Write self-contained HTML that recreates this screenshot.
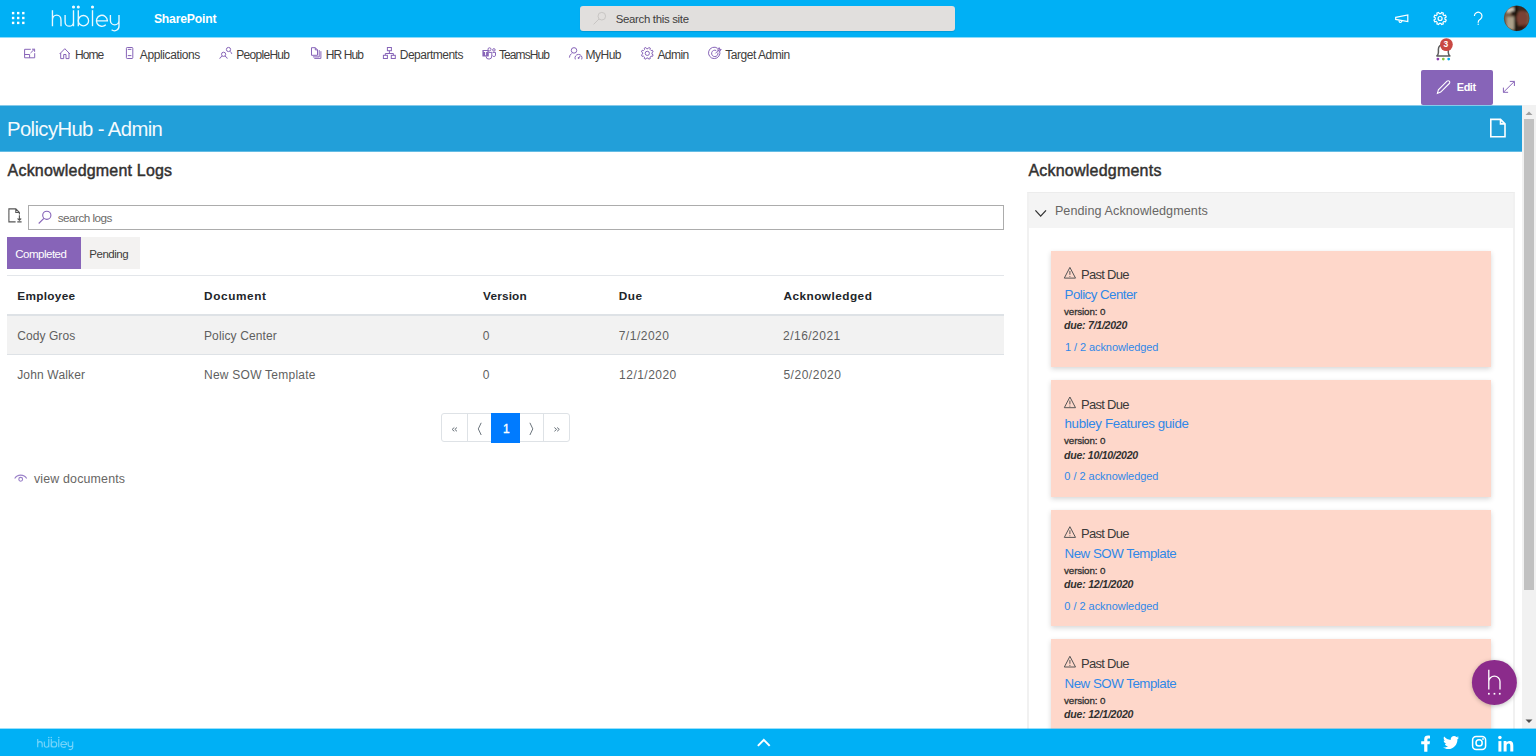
<!DOCTYPE html>
<html><head><meta charset="utf-8"><style>
html,body{margin:0;padding:0;width:1536px;height:756px;overflow:hidden;background:#fff}
.b{position:absolute;box-sizing:border-box}
.t{position:absolute;white-space:nowrap;line-height:20px;font-family:"Liberation Sans",sans-serif}
svg{position:absolute;left:0;top:0}
#foot{position:absolute;left:0;top:729px;width:1536px;height:27px;background:#00b0f5}
</style></head><body>
<div class="b" style="left:0px;top:0px;width:1536px;height:37px;background:#00b0f5"></div><div class="b" style="left:0px;top:37px;width:1536px;height:1px;background:rgba(0,176,245,0.45)"></div><div class="b" style="left:580px;top:6px;width:375px;height:25px;background:#e1dfdd;border-radius:3px;box-shadow:0 1px 1px rgba(0,0,0,0.12)"></div><div class="b" style="left:1421px;top:70px;width:72px;height:34.5px;background:#8764b8;border-radius:2px"></div><div class="b" style="left:0px;top:106px;width:1522px;height:45px;background:#229fd9"></div><div class="b" style="left:0px;top:105px;width:1522px;height:1px;background:rgba(34,159,217,0.55)"></div><div class="b" style="left:0px;top:151px;width:1522px;height:1px;background:rgba(34,159,217,0.7)"></div><div class="b" style="left:1522px;top:105px;width:14px;height:624px;background:#f1f1f1"></div><div class="b" style="left:1524px;top:119px;width:10px;height:471px;background:#c1c1c1"></div><div class="b" style="left:28px;top:205px;width:976px;height:25px;border:1px solid #acacac;background:#fff"></div><div class="b" style="left:7px;top:237px;width:74px;height:32px;background:#8764b8"></div><div class="b" style="left:81px;top:237px;width:59px;height:32px;background:#f3f2f1"></div><div class="b" style="left:7px;top:275px;width:997px;height:1px;background:#e3e6ea"></div><div class="b" style="left:7px;top:314px;width:997px;height:2px;background:#dee2e6"></div><div class="b" style="left:7px;top:316px;width:997px;height:38px;background:#f2f2f2"></div><div class="b" style="left:7px;top:354px;width:997px;height:1px;background:#dee2e6"></div><div class="b" style="left:441px;top:413px;width:129px;height:29px;border:1px solid #dee2e6;border-radius:3px;background:#fff"></div><div class="b" style="left:467px;top:414px;width:1px;height:28px;background:#dee2e6"></div><div class="b" style="left:491px;top:414px;width:1px;height:28px;background:#dee2e6"></div><div class="b" style="left:519px;top:414px;width:1px;height:28px;background:#dee2e6"></div><div class="b" style="left:543px;top:414px;width:1px;height:28px;background:#dee2e6"></div><div class="b" style="left:491px;top:413px;width:29px;height:30px;background:#007bff"></div><div class="b" style="left:1027px;top:192px;width:488px;height:540px;border:2px solid #f1f1f1;border-top:1px solid #ececec;background:#fff"></div><div class="b" style="left:1029px;top:193px;width:484px;height:35px;background:#f4f4f4"></div><div class="b" style="left:1051px;top:250.5px;width:440px;height:116.5px;background:#fed7ca;box-shadow:0 2px 5px rgba(0,0,0,0.16)"></div><div class="b" style="left:1051px;top:380.1px;width:440px;height:116.5px;background:#fed7ca;box-shadow:0 2px 5px rgba(0,0,0,0.16)"></div><div class="b" style="left:1051px;top:509.8px;width:440px;height:116.5px;background:#fed7ca;box-shadow:0 2px 5px rgba(0,0,0,0.16)"></div><div class="b" style="left:1051px;top:639.4px;width:440px;height:116.5px;background:#fed7ca;box-shadow:0 2px 5px rgba(0,0,0,0.16)"></div>
<svg width="1536" height="756" viewBox="0 0 1536 756"><rect x="11.9" y="11.9" width="2.4" height="2.4" fill="#fff"/><rect x="11.9" y="16.8" width="2.4" height="2.4" fill="#fff"/><rect x="11.9" y="21.7" width="2.4" height="2.4" fill="#fff"/><rect x="17.0" y="11.9" width="2.4" height="2.4" fill="#fff"/><rect x="17.0" y="16.8" width="2.4" height="2.4" fill="#fff"/><rect x="17.0" y="21.7" width="2.4" height="2.4" fill="#fff"/><rect x="22.1" y="11.9" width="2.4" height="2.4" fill="#fff"/><rect x="22.1" y="16.8" width="2.4" height="2.4" fill="#fff"/><rect x="22.1" y="21.7" width="2.4" height="2.4" fill="#fff"/><g fill="none" stroke="#fff" stroke-width="1.35" opacity="0.92"><path d="M52.45 10.2V26.2M52.45 20A4.27 4.9 0 0 1 61 20V26.2"/><path d="M65.1 15.1V21.9A4.2 4.3 0 0 0 73.5 21.9M73.5 10.2V26.2"/><path d="M78.3 10.2V26.2"/><circle cx="83.45" cy="20.65" r="5.15"/><path d="M92.5 10.2V26.2"/><path d="M96.4 20.8H107.4A5.5 5.5 0 1 0 105.8 24.7"/><path d="M110.4 15.1V20.6A4.3 4.3 0 0 0 119 20.6M119 15.1V26A4.6 4.6 0 0 1 111.6 29.8"/></g><g fill="#fff" opacity="0.95"><circle cx="73.5" cy="7" r="1.55"/><circle cx="78.3" cy="7" r="1.55"/><circle cx="92.5" cy="7" r="1.55"/></g><g fill="none" stroke="#c8c6c4" stroke-width="1"><circle cx="601.8" cy="16.2" r="3.8"/><path d="M599 19L593.6 24.4"/></g><g fill="none" stroke="#fff" stroke-width="1.2"><path d="M1395.7 17.3L1407.8 15V21.6L1395.7 19.4Z"/><path d="M1399.2 20.6A1.35 1.35 0 1 0 1401.8 21.1"/></g><g fill="none" stroke="#fff" stroke-width="1.2"><path d="M1444.94 19.25 L1446.21 20.04 L1445.51 21.73 L1444.05 21.40 L1443.00 22.45 L1443.33 23.91 L1441.64 24.61 L1440.85 23.34 L1439.35 23.34 L1438.56 24.61 L1436.87 23.91 L1437.20 22.45 L1436.15 21.40 L1434.69 21.73 L1433.99 20.04 L1435.26 19.25 L1435.26 17.75 L1433.99 16.96 L1434.69 15.27 L1436.15 15.60 L1437.20 14.55 L1436.87 13.09 L1438.56 12.39 L1439.35 13.66 L1440.85 13.66 L1441.64 12.39 L1443.33 13.09 L1443.00 14.55 L1444.05 15.60 L1445.51 15.27 L1446.21 16.96 L1444.94 17.75 Z"/><circle cx="1440.1" cy="18.5" r="2.0"/></g><g fill="none" stroke="#fff" stroke-width="1.2"><path d="M1474.4 15.9A3.8 3.8 0 1 1 1480.3 19.2Q1478.2 20.3 1478.2 22.3V22.7"/></g><circle cx="1478.2" cy="24.3" r="0.7" fill="#fff"/><defs><clipPath id="avc"><circle cx="1516.7" cy="18.3" r="12.6"/></clipPath><filter id="avb" x="-20%" y="-20%" width="140%" height="140%"><feGaussianBlur stdDeviation="0.9"/></filter></defs><g clip-path="url(#avc)"><g filter="url(#avb)"><rect x="1502" y="3" width="30" height="31" fill="#7a6048"/><rect x="1506.5" y="8" width="8" height="4.5" fill="#d2c8b8"/><rect x="1511" y="11" width="4" height="5" fill="#2e241c"/><rect x="1506.8" y="17" width="8" height="12.5" fill="#aca08a"/><rect x="1514.5" y="3" width="18" height="9" fill="#3a2a22"/><rect x="1514.2" y="3" width="3.6" height="31" fill="#1a120c"/><ellipse cx="1522.3" cy="18.5" rx="5.8" ry="7.8" fill="#7a4234"/><rect x="1517.5" y="25.5" width="15" height="8" fill="#2e1a14"/><rect x="1523.5" y="24.5" width="5" height="4" fill="#62281f"/></g></g><circle cx="1516.7" cy="18.3" r="12.4" fill="none" stroke="#3a2a20" stroke-width="0.6" opacity="0.6"/><g fill="none" stroke="#8764b8" stroke-width="1"><path d="M30.8 49.3H24.6V57.8H34.7V53.2M24.6 54.5H29.6V57.8M30.5 53L34.4 49.2M32 49.2H34.6V51.8"/><path d="M59.6 54L64.8 48.7L70 54M60.7 53V58.6H63.7V54.5H66V58.6H69V53"/><rect x="126.4" y="47.5" width="6.4" height="11" rx="0.8"/><path d="M127.8 49.4H131.4M127.8 55.6H131.4"/><circle cx="228.5" cy="49.5" r="2.1"/><circle cx="223.6" cy="54.3" r="2.1"/><path d="M219.7 58.7Q220.4 56.6 222.2 56.3M225 56.3Q226.6 56.6 227.3 58.6M230.2 51.6Q231.4 52 231.8 53.9"/><path d="M311.5 47.7H315.3L317.5 49.9V55.3H311.5Z M315.3 47.7V49.9H317.5"/><path d="M312.9 56.9H319.2V50.1M314.3 58.4H320.9V51.2"/><rect x="387.4" y="47.5" width="4" height="3.2"/><path d="M389.4 50.7V53.5M385.3 55.2V53.5H393.4V55.2"/><rect x="383.4" y="55.3" width="4" height="3.2"/><rect x="391.3" y="55.3" width="4" height="3.2"/><circle cx="489.5" cy="49.3" r="1.5"/><circle cx="493.9" cy="49.9" r="1.25"/><path d="M488.8 52.4H491.8V56A2.9 2.9 0 0 1 486 56.4"/><path d="M492.6 52.4H495.5V55.2A1.5 1.5 0 0 1 492.6 55.6"/><circle cx="574" cy="50.4" r="2.75"/><path d="M569.4 57.6A5.2 5.2 0 0 1 571.8 53.4M575.33 59.4A3.5 3.5 0 1 1 581.67 59.4M578.6 58L580.4 55.9"/><path d="M651.94 54.07 L653.12 54.82 L652.45 56.42 L651.09 56.13 L650.08 57.14 L650.37 58.50 L648.77 59.17 L648.02 57.99 L646.58 57.99 L645.83 59.17 L644.23 58.50 L644.52 57.14 L643.51 56.13 L642.15 56.42 L641.48 54.82 L642.66 54.07 L642.66 52.63 L641.48 51.88 L642.15 50.28 L643.51 50.57 L644.52 49.56 L644.23 48.20 L645.83 47.53 L646.58 48.71 L648.02 48.71 L648.77 47.53 L650.37 48.20 L650.08 49.56 L651.09 50.57 L652.45 50.28 L653.12 51.88 L651.94 52.63 Z"/><circle cx="647.3" cy="53.35" r="2.1"/><path d="M719.6 51A5.7 5.7 0 1 1 717.6 48.3M717.9 52.6A3.2 3.2 0 1 1 716.2 50.5M715.4 53.4L719.2 49.6M718 48.6V50.8H720.3L721.2 49.4H719.4V47.8Z"/></g><circle cx="578.6" cy="58" r="0.9" fill="#8764b8"/><rect x="482.4" y="49.9" width="6.4" height="6.7" rx="0.7" fill="#8764b8"/><path d="M483.8 51.5H487.4M485.6 51.5V55.3" stroke="#fff" stroke-width="1" fill="none"/><path d="M1436.8 55.9H1449.9Q1448.4 55 1448.3 52.5V49.3A4.95 4.95 0 0 0 1438.4 49.3V52.5Q1438.3 55 1436.8 55.9Z" fill="none" stroke="#5c5c5c" stroke-width="1.5" stroke-linejoin="round"/><circle cx="1437.9" cy="59.1" r="1.4" fill="#8e3fb0"/><circle cx="1443.3" cy="59.1" r="1.4" fill="#8cc63f"/><circle cx="1448.7" cy="59.1" r="1.4" fill="#00aeef"/><circle cx="1446.4" cy="44.6" r="6.4" fill="#c94843"/><g fill="none" stroke="#fff" stroke-width="1.1"><path d="M1437.4 93.4L1438.4 89.8L1447 81.2A1.6 1.6 0 0 1 1449.3 83.5L1440.7 92.1Z"/></g><g fill="none" stroke="#8764b8" stroke-width="1"><path d="M1503.4 92.3L1514.4 81.4M1503.4 87.6V92.3H1508.1M1509.8 81.4H1514.4V86"/></g><path d="M1490.8 119.4H1500.5L1505 123.9V136.8H1490.8Z M1500.5 119.4V123.9H1505" fill="none" stroke="#fff" stroke-width="1.6"/><path d="M1525.5 115L1529 111.5L1532.5 115Z" fill="#a0a0a0"/><path d="M1525.5 719.5L1529 723L1532.5 719.5Z" fill="#505050"/><g fill="none" stroke="#555" stroke-width="1.1"><path d="M15.6 221.9H8.9V208.9H15.8L19.4 212.5V214.6M15.8 208.9V212.5H19.4M19.4 215.3V220.1M17.6 218.5L19.4 220.3L21.2 218.5M17.3 221.9H21.6"/></g><g fill="none" stroke="#8764b8" stroke-width="1.1"><circle cx="46.8" cy="215.3" r="4.1"/><path d="M43.9 218.3L38.7 223.5"/></g><g fill="none" stroke="#6c757d" stroke-width="1"><path d="M454.3 427.5L452.1 429.4L454.3 431.3M457 427.5L454.8 429.4L457 431.3M481.2 422.8L478.3 428.9L481.2 435M529.9 422.8L532.8 428.9L529.9 435M554.4 427.5L556.6 429.4L554.4 431.3M557.1 427.5L559.3 429.4L557.1 431.3"/></g><g fill="none" stroke="#9a80c8" stroke-width="1.1"><path d="M14.7 478.6A6.9 6.9 0 0 1 26.7 478.6"/><circle cx="20.7" cy="479.3" r="1.9"/></g><path d="M1035.4 210.4L1040.7 216.1L1046 210.4" fill="none" stroke="#333" stroke-width="1.3"/><g transform="translate(0 0.00)"><path d="M1069.9 267.4L1075.5 278.1H1064.3Z" fill="none" stroke="#555" stroke-width="1" stroke-linejoin="round"/><path d="M1069.9 271V274.8" stroke="#555" stroke-width="1"/><circle cx="1069.9" cy="276.5" r="0.55" fill="#555"/></g><g transform="translate(0 129.60)"><path d="M1069.9 267.4L1075.5 278.1H1064.3Z" fill="none" stroke="#555" stroke-width="1" stroke-linejoin="round"/><path d="M1069.9 271V274.8" stroke="#555" stroke-width="1"/><circle cx="1069.9" cy="276.5" r="0.55" fill="#555"/></g><g transform="translate(0 259.30)"><path d="M1069.9 267.4L1075.5 278.1H1064.3Z" fill="none" stroke="#555" stroke-width="1" stroke-linejoin="round"/><path d="M1069.9 271V274.8" stroke="#555" stroke-width="1"/><circle cx="1069.9" cy="276.5" r="0.55" fill="#555"/></g><g transform="translate(0 388.90)"><path d="M1069.9 267.4L1075.5 278.1H1064.3Z" fill="none" stroke="#555" stroke-width="1" stroke-linejoin="round"/><path d="M1069.9 271V274.8" stroke="#555" stroke-width="1"/><circle cx="1069.9" cy="276.5" r="0.55" fill="#555"/></g></svg>
<span class="t" id="sp" style="left:153.90px;top:9.00px;font-size:12.2px;letter-spacing:-0.189px;font-weight:700;font-style:normal;color:#ffffff;">SharePoint</span><span class="t" id="srch" style="left:615.70px;top:9.10px;font-size:11.4px;letter-spacing:-0.302px;font-weight:400;font-style:normal;color:#3e3d3c;">Search this site</span><span class="t" id="nav0" style="left:74.90px;top:44.80px;font-size:12.0px;letter-spacing:-0.905px;font-weight:400;font-style:normal;color:#3e3d3c;">Home</span><span class="t" id="nav1" style="left:139.80px;top:44.80px;font-size:12.0px;letter-spacing:-0.382px;font-weight:400;font-style:normal;color:#3e3d3c;">Applications</span><span class="t" id="nav2" style="left:236.30px;top:44.80px;font-size:12.0px;letter-spacing:-0.709px;font-weight:400;font-style:normal;color:#3e3d3c;">PeopleHub</span><span class="t" id="nav3" style="left:325.80px;top:44.80px;font-size:12.0px;letter-spacing:-0.917px;font-weight:400;font-style:normal;color:#3e3d3c;">HR Hub</span><span class="t" id="nav4" style="left:399.80px;top:44.80px;font-size:12.0px;letter-spacing:-0.510px;font-weight:400;font-style:normal;color:#3e3d3c;">Departments</span><span class="t" id="nav5" style="left:499.00px;top:44.80px;font-size:12.0px;letter-spacing:-0.923px;font-weight:400;font-style:normal;color:#3e3d3c;">TeamsHub</span><span class="t" id="nav6" style="left:585.60px;top:44.80px;font-size:12.0px;letter-spacing:-0.529px;font-weight:400;font-style:normal;color:#3e3d3c;">MyHub</span><span class="t" id="nav7" style="left:657.40px;top:44.80px;font-size:12.0px;letter-spacing:-0.555px;font-weight:400;font-style:normal;color:#3e3d3c;">Admin</span><span class="t" id="nav8" style="left:725.30px;top:44.80px;font-size:12.0px;letter-spacing:-0.467px;font-weight:400;font-style:normal;color:#3e3d3c;">Target Admin</span><span class="t" id="edit" style="left:1456.80px;top:77.00px;font-size:10.9px;letter-spacing:-0.430px;font-weight:700;font-style:normal;color:#ffffff;">Edit</span><span class="t" id="title" style="left:7.00px;top:118.80px;font-size:20.3px;letter-spacing:-0.616px;font-weight:400;font-style:normal;color:#f4fafd;">PolicyHub - Admin</span><span class="t" id="alogs" style="left:7.60px;top:160.90px;font-size:16px;letter-spacing:0.195px;font-weight:400;font-style:normal;color:#323130;-webkit-text-stroke:0.45px #323130;">Acknowledgment Logs</span><span class="t" id="slogs" style="left:57.70px;top:208.20px;font-size:11.7px;letter-spacing:-0.503px;font-weight:400;font-style:normal;color:#6c6a68;">search logs</span><span class="t" id="tcomp" style="left:15.20px;top:243.50px;font-size:11.5px;letter-spacing:-0.489px;font-weight:400;font-style:normal;color:#ffffff;">Completed</span><span class="t" id="tpend" style="left:89.30px;top:243.50px;font-size:11.5px;letter-spacing:-0.484px;font-weight:400;font-style:normal;color:#3e3d3c;">Pending</span><span class="t" id="th0" style="left:17.20px;top:286.10px;font-size:11.8px;letter-spacing:0.322px;font-weight:700;font-style:normal;color:#212529;">Employee</span><span class="t" id="th1" style="left:204.00px;top:286.10px;font-size:11.8px;letter-spacing:0.616px;font-weight:700;font-style:normal;color:#212529;">Document</span><span class="t" id="th2" style="left:483.10px;top:286.10px;font-size:11.8px;letter-spacing:0.161px;font-weight:700;font-style:normal;color:#212529;">Version</span><span class="t" id="th3" style="left:618.70px;top:286.10px;font-size:11.8px;letter-spacing:0.505px;font-weight:700;font-style:normal;color:#212529;">Due</span><span class="t" id="th4" style="left:783.40px;top:286.10px;font-size:11.8px;letter-spacing:0.475px;font-weight:700;font-style:normal;color:#212529;">Acknowledged</span><span class="t" id="td00" style="left:17.20px;top:325.80px;font-size:12.0px;letter-spacing:0.082px;font-weight:400;font-style:normal;color:#5f5f5f;">Cody Gros</span><span class="t" id="td01" style="left:204.00px;top:325.80px;font-size:12.0px;letter-spacing:0.120px;font-weight:400;font-style:normal;color:#5f5f5f;">Policy Center</span><span class="t" id="td02" style="left:482.80px;top:325.80px;font-size:12.0px;letter-spacing:0.000px;font-weight:400;font-style:normal;color:#5f5f5f;">0</span><span class="t" id="td03" style="left:618.70px;top:325.80px;font-size:12.0px;letter-spacing:0.512px;font-weight:400;font-style:normal;color:#5f5f5f;">7/1/2020</span><span class="t" id="td04" style="left:783.10px;top:325.80px;font-size:12.0px;letter-spacing:0.464px;font-weight:400;font-style:normal;color:#5f5f5f;">2/16/2021</span><span class="t" id="td10" style="left:17.20px;top:365.20px;font-size:12.0px;letter-spacing:0.165px;font-weight:400;font-style:normal;color:#5f5f5f;">John Walker</span><span class="t" id="td11" style="left:204.00px;top:365.20px;font-size:12.0px;letter-spacing:0.246px;font-weight:400;font-style:normal;color:#5f5f5f;">New SOW Template</span><span class="t" id="td12" style="left:482.80px;top:365.20px;font-size:12.0px;letter-spacing:0.000px;font-weight:400;font-style:normal;color:#5f5f5f;">0</span><span class="t" id="td13" style="left:619.10px;top:365.20px;font-size:12.0px;letter-spacing:0.477px;font-weight:400;font-style:normal;color:#5f5f5f;">12/1/2020</span><span class="t" id="td14" style="left:783.40px;top:365.20px;font-size:12.0px;letter-spacing:0.527px;font-weight:400;font-style:normal;color:#5f5f5f;">5/20/2020</span><span class="t" id="pg1" style="left:503.00px;top:419.20px;font-size:12.0px;letter-spacing:0.000px;font-weight:400;font-style:normal;color:#ffffff;-webkit-text-stroke:0.35px #ffffff;">1</span><span class="t" id="vdoc" style="left:33.90px;top:468.80px;font-size:12.4px;letter-spacing:0.176px;font-weight:400;font-style:normal;color:#686664;">view documents</span><span class="t" id="acks" style="left:1028.40px;top:161.00px;font-size:16px;letter-spacing:0.226px;font-weight:400;font-style:normal;color:#323130;-webkit-text-stroke:0.45px #323130;">Acknowledgments</span><span class="t" id="pend" style="left:1054.90px;top:201.00px;font-size:12.6px;letter-spacing:0.077px;font-weight:400;font-style:normal;color:#686664;">Pending Acknowledgments</span><span class="t" id="c0pd" style="left:1081.00px;top:265.10px;font-size:13.0px;letter-spacing:-0.710px;font-weight:400;font-style:normal;color:#3b3a39;">Past Due</span><span class="t" id="c0t" style="left:1064.60px;top:284.70px;font-size:13.3px;letter-spacing:-0.541px;font-weight:400;font-style:normal;color:#3088e8;">Policy Center</span><span class="t" id="c0v" style="left:1064.10px;top:301.70px;font-size:9.8px;letter-spacing:-0.131px;font-weight:400;font-style:normal;color:#323130;-webkit-text-stroke:0.3px #323130;">version: 0</span><span class="t" id="c0d" style="left:1064.10px;top:315.00px;font-size:10.6px;letter-spacing:-0.273px;font-weight:700;font-style:italic;color:#323130;">due: 7/1/2020</span><span class="t" id="c0a" style="left:1065.00px;top:336.80px;font-size:11.0px;letter-spacing:-0.082px;font-weight:400;font-style:normal;color:#3088e8;">1 / 2 acknowledged</span><span class="t" id="c1pd" style="left:1081.00px;top:394.70px;font-size:13.0px;letter-spacing:-0.710px;font-weight:400;font-style:normal;color:#3b3a39;">Past Due</span><span class="t" id="c1t" style="left:1064.60px;top:414.30px;font-size:13.3px;letter-spacing:-0.366px;font-weight:400;font-style:normal;color:#3088e8;">hubley Features guide</span><span class="t" id="c1v" style="left:1064.10px;top:431.30px;font-size:9.8px;letter-spacing:-0.131px;font-weight:400;font-style:normal;color:#323130;-webkit-text-stroke:0.3px #323130;">version: 0</span><span class="t" id="c1d" style="left:1064.10px;top:444.60px;font-size:10.6px;letter-spacing:-0.305px;font-weight:700;font-style:italic;color:#323130;">due: 10/10/2020</span><span class="t" id="c1a" style="left:1064.30px;top:466.40px;font-size:11.0px;letter-spacing:-0.035px;font-weight:400;font-style:normal;color:#3088e8;">0 / 2 acknowledged</span><span class="t" id="c2pd" style="left:1081.00px;top:524.40px;font-size:13.0px;letter-spacing:-0.710px;font-weight:400;font-style:normal;color:#3b3a39;">Past Due</span><span class="t" id="c2t" style="left:1064.60px;top:544.00px;font-size:13.3px;letter-spacing:-0.486px;font-weight:400;font-style:normal;color:#3088e8;">New SOW Template</span><span class="t" id="c2v" style="left:1064.10px;top:561.00px;font-size:9.8px;letter-spacing:-0.131px;font-weight:400;font-style:normal;color:#323130;-webkit-text-stroke:0.3px #323130;">version: 0</span><span class="t" id="c2d" style="left:1064.10px;top:574.30px;font-size:10.6px;letter-spacing:-0.236px;font-weight:700;font-style:italic;color:#323130;">due: 12/1/2020</span><span class="t" id="c2a" style="left:1064.30px;top:596.10px;font-size:11.0px;letter-spacing:-0.035px;font-weight:400;font-style:normal;color:#3088e8;">0 / 2 acknowledged</span><span class="t" id="c3pd" style="left:1081.00px;top:654.00px;font-size:13.0px;letter-spacing:-0.710px;font-weight:400;font-style:normal;color:#3b3a39;">Past Due</span><span class="t" id="c3t" style="left:1064.60px;top:673.60px;font-size:13.3px;letter-spacing:-0.486px;font-weight:400;font-style:normal;color:#3088e8;">New SOW Template</span><span class="t" id="c3v" style="left:1064.10px;top:690.60px;font-size:9.8px;letter-spacing:-0.131px;font-weight:400;font-style:normal;color:#323130;-webkit-text-stroke:0.3px #323130;">version: 0</span><span class="t" id="c3d" style="left:1064.10px;top:703.90px;font-size:10.6px;letter-spacing:-0.236px;font-weight:700;font-style:italic;color:#323130;">due: 12/1/2020</span><span class="t" id="c3a" style="left:1064.30px;top:725.70px;font-size:11.0px;letter-spacing:-0.035px;font-weight:400;font-style:normal;color:#3088e8;">0 / 2 acknowledged</span>
<svg width="1536" height="756" viewBox="0 0 1536 756" style="filter:drop-shadow(0 1px 2px rgba(0,0,0,0.25))"><circle cx="1494.4" cy="682.4" r="22.5" fill="#8b2b8b"/><path d="M1488.8 669.8V689.5M1488.8 681.6A5.6 5.4 0 0 1 1500 681.6V689.5" fill="none" stroke="#fff" stroke-width="1.3"/><rect x="1488" y="692.9" width="1.7" height="1.7" fill="#fff"/><rect x="1493.6" y="692.9" width="1.7" height="1.7" fill="#fff"/><rect x="1498.9" y="692.9" width="1.7" height="1.7" fill="#fff"/></svg>
<span class="t" style="left:1443.6px;top:33.9px;font-size:8.5px;font-weight:700;color:#fff">3</span>
<div id="foot"></div><div class="b" style="left:0;top:728px;width:1536px;height:1px;background:rgba(0,176,245,0.4)"></div>
<svg width="1536" height="756" viewBox="0 0 1536 756"><g transform="translate(37.2 736.7) scale(0.526 0.51) translate(-51.5 -5.5)"><g fill="none" stroke="#fff" stroke-width="2.2" opacity="0.45"><path d="M52.45 10.2V26.2M52.45 20A4.27 4.9 0 0 1 61 20V26.2"/><path d="M65.1 15.1V21.9A4.2 4.3 0 0 0 73.5 21.9M73.5 10.2V26.2"/><path d="M78.3 10.2V26.2"/><circle cx="83.45" cy="20.65" r="5.15"/><path d="M92.5 10.2V26.2"/><path d="M96.4 20.8H107.4A5.5 5.5 0 1 0 105.8 24.7"/><path d="M110.4 15.1V20.6A4.3 4.3 0 0 0 119 20.6M119 15.1V26A4.6 4.6 0 0 1 111.6 29.8"/></g><g fill="#fff" opacity="0.45"><circle cx="73.5" cy="7" r="1.55"/><circle cx="78.3" cy="7" r="1.55"/><circle cx="92.5" cy="7" r="1.55"/></g></g><path d="M757.9 745.9L763.8 739.9L769.7 745.9" fill="none" stroke="#fff" stroke-width="2"/><path d="M1424.2 751.7V744.2H1421.2V741.2H1424.2V739.2C1424.2 736.6 1425.7 735.5 1428 735.5C1428.9 735.5 1429.7 735.6 1430 735.7V738.4H1428.6C1427.6 738.4 1427.4 738.9 1427.4 739.6V741.2H1430L1429.6 744.2H1427.4V751.7Z" fill="#fff"/><path d="M1459 737.6C1458.4 737.9 1457.8 738 1457.1 738.1C1457.8 737.7 1458.3 737.1 1458.5 736.3C1457.9 736.7 1457.2 736.9 1456.4 737.1C1455.8 736.4 1455 736 1454 736C1452.2 736 1450.7 737.5 1450.7 739.3C1450.7 739.6 1450.7 739.8 1450.8 740C1448.1 739.9 1445.7 738.6 1444.1 736.6C1443.8 737.1 1443.7 737.6 1443.7 738.2C1443.7 739.4 1444.3 740.4 1445.2 741C1444.7 741 1444.2 740.8 1443.7 740.6C1443.7 742.2 1444.9 743.5 1446.4 743.8C1446.1 743.9 1445.8 743.9 1445.5 743.9C1445.3 743.9 1445.1 743.9 1444.9 743.9C1445.3 745.2 1446.5 746.2 1448 746.2C1446.9 747.1 1445.4 747.6 1443.8 747.6C1443.5 747.6 1443.3 747.6 1443 747.6C1444.5 748.5 1446.2 749.1 1448.1 749.1C1454.1 749.1 1457.4 744.1 1457.4 739.7V739.3C1458.1 738.8 1458.6 738.3 1459 737.6Z" fill="#fff"/><g fill="none" stroke="#fff" stroke-width="1.5"><rect x="1472.6" y="736.4" width="13" height="13" rx="3.5"/><circle cx="1479.1" cy="742.9" r="3.1"/></g><circle cx="1483" cy="739" r="0.9" fill="#fff"/><path d="M1498.4 741.1H1501.4V751.6H1498.4Z" fill="#fff"/><circle cx="1499.9" cy="737.4" r="1.75" fill="#fff"/><path d="M1503.6 741.1H1506.5V742.6C1506.9 741.8 1507.9 740.9 1509.5 740.9C1512.6 740.9 1513.3 742.9 1513.3 745.5V751.6H1510.3V746.2C1510.3 744.9 1510.2 743.5 1508.6 743.5C1507 743.5 1506.6 744.7 1506.6 746.1V751.6H1503.6Z" fill="#fff"/></svg>
</body></html>
